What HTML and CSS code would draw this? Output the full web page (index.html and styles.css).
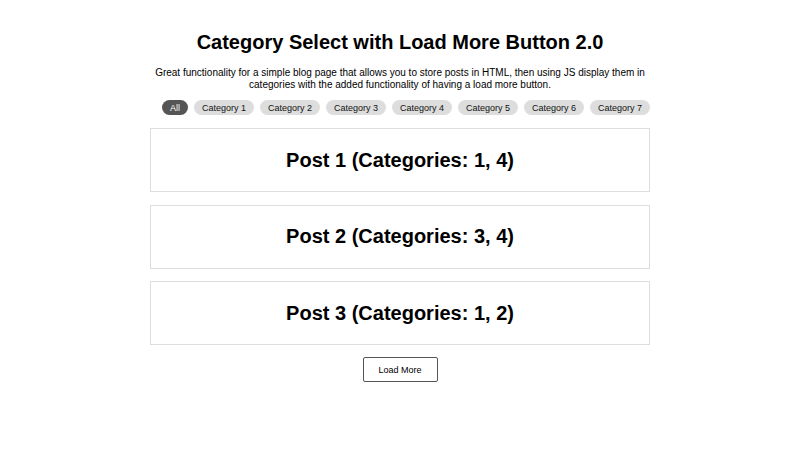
FILE: index.html
```html
<!DOCTYPE html>
<html lang="en">
<head>
  <meta charset="UTF-8">
  <meta name="viewport" content="width=device-width, initial-scale=1.0">
  <title>Category Select with Load More Button 2.0</title>
  <link rel="stylesheet" href="styles.css">
</head>
<body>
  <main class="wrap">
    <h1>Category Select with Load More Button 2.0</h1>
    <p class="intro">Great functionality for a simple blog page that allows you to store posts in HTML, then using JS display them in categories with the added functionality of having a load more button.</p>
    <div class="filters">
      <button class="pill active">All</button>
      <button class="pill">Category 1</button>
      <button class="pill">Category 2</button>
      <button class="pill">Category 3</button>
      <button class="pill">Category 4</button>
      <button class="pill">Category 5</button>
      <button class="pill">Category 6</button>
      <button class="pill">Category 7</button>
    </div>
    <div class="posts">
      <div class="post"><h2>Post 1 (Categories: 1, 4)</h2></div>
      <div class="post"><h2>Post 2 (Categories: 3, 4)</h2></div>
      <div class="post"><h2>Post 3 (Categories: 1, 2)</h2></div>
    </div>
    <div class="more-row">
      <button class="load-more">Load More</button>
    </div>
  </main>
</body>
</html>
```

FILE: styles.css
```css
*, *::before, *::after { box-sizing: border-box; }
body {
  margin: 0;
  background: #fff;
  color: #000;
  font-family: 'Liberation Sans', Arial, sans-serif;
}
.wrap {
  width: 500px;
  margin: 0 auto;
  padding-top: 30px;
}
h1 {
  margin: 0;
  font-size: 20px;
  font-weight: 700;
  text-align: center;
  line-height: 24px;
}
.intro {
  margin: 13px -5px 0;
  font-size: 10px;
  line-height: 12px;
  text-align: center;
}
.filters {
  display: flex;
  justify-content: center;
  gap: 6px;
  margin: 9px 0 13px;
  padding-left: 12px;
}
.pill {
  border: none;
  border-radius: 8px;
  background: #ddd;
  color: #111;
  font-family: inherit;
  font-size: 9px;
  height: 15px;
  padding: 0 8px;
  cursor: pointer;
  white-space: nowrap;
}
.pill.active { background: #555; color: #fff; }
.posts { display: flex; flex-direction: column; gap: 12.5px; }
.post {
  border: 1px solid #ddd;
  height: 64px;
  display: flex;
  align-items: center;
  justify-content: center;
}
.post h2 { margin: 0; font-size: 20px; font-weight: 700; }
.more-row { display: flex; justify-content: center; margin-top: 12px; }
.load-more {
  width: 75px;
  height: 25px;
  border: 1px solid #555;
  border-radius: 2px;
  background: #fff;
  color: #000;
  font-family: inherit;
  font-size: 9px;
  cursor: pointer;
}
```
